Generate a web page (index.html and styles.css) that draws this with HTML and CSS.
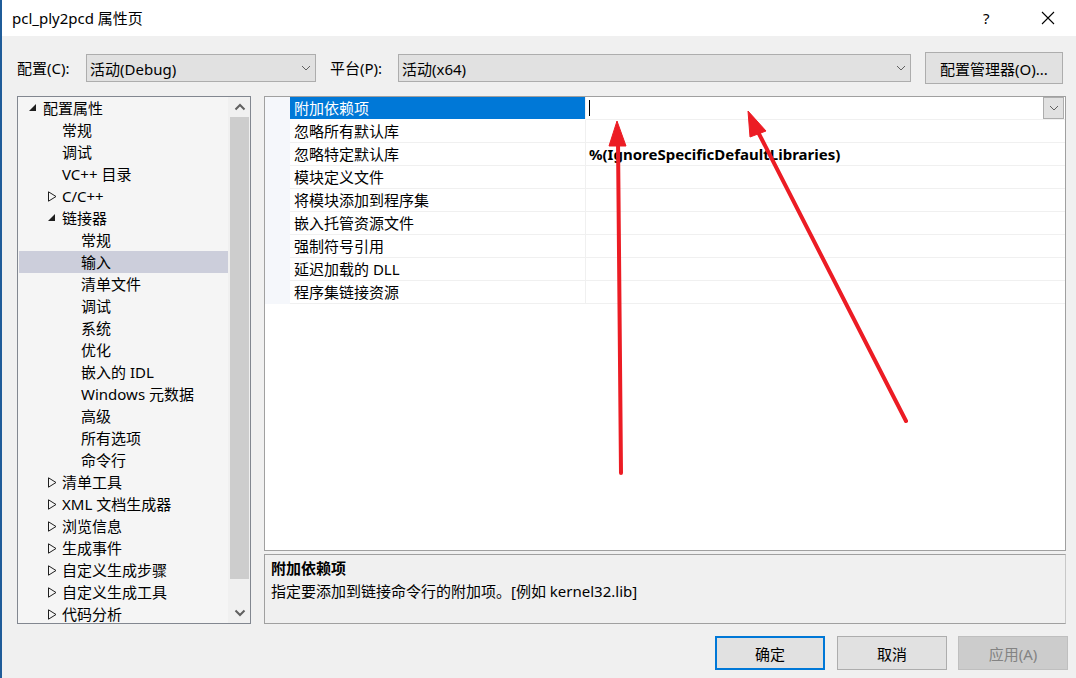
FILE: index.html
```html
<!DOCTYPE html>
<html lang="zh-CN">
<head>
<meta charset="utf-8">
<title>pcl_ply2pcd 属性页</title>
<link rel="stylesheet" href="styles.css">
</head>
<body>
<div class="window">
  <div class="titlebar">
    <div class="title">pcl_ply2pcd 属性页</div>
    <div class="title-btns">
      <span class="help">?</span>
      <svg class="close" width="14" height="14" viewBox="0 0 14 14"><path d="M1 1 L13 13 M13 1 L1 13" stroke="#000" stroke-width="1.1" fill="none"/></svg>
    </div>
  </div>

  <div class="content">
    <div class="config-row">
      <span class="lbl">配置(C):</span>
      <div class="combo combo-config"><span>活动(Debug)</span><svg class="chev" width="10" height="6" viewBox="0 0 10 6"><path d="M1 1 L5 5 L9 1" stroke="#606060" fill="none"/></svg></div>
      <span class="lbl lbl-plat">平台(P):</span>
      <div class="combo combo-plat"><span>活动(x64)</span><svg class="chev" width="10" height="6" viewBox="0 0 10 6"><path d="M1 1 L5 5 L9 1" stroke="#606060" fill="none"/></svg></div>
      <div class="btn btn-mgr">配置管理器(O)...</div>
    </div>

    <div class="main">
      <div class="tree">
        <div class="tree-list">
          <div class="row l0"><span class="tg"><svg width="8" height="8" viewBox="0 0 8 8"><path d="M7 0 L7 7 L0 7 Z" fill="#1e1e1e"/></svg></span>配置属性</div>
          <div class="row l1"><span class="tg"></span>常规</div>
          <div class="row l1"><span class="tg"></span>调试</div>
          <div class="row l1"><span class="tg"></span>VC++ 目录</div>
          <div class="row l1"><span class="tg"><svg width="9" height="11" viewBox="0 0 9 11"><path d="M0.5 0.8 L8 5.5 L0.5 10.2 Z" fill="none" stroke="#1e1e1e"/></svg></span>C/C++</div>
          <div class="row l1"><span class="tg"><svg width="8" height="8" viewBox="0 0 8 8"><path d="M7 0 L7 7 L0 7 Z" fill="#1e1e1e"/></svg></span>链接器</div>
          <div class="row l2"><span class="tg"></span>常规</div>
          <div class="row l2 sel"><span class="tg"></span>输入</div>
          <div class="row l2"><span class="tg"></span>清单文件</div>
          <div class="row l2"><span class="tg"></span>调试</div>
          <div class="row l2"><span class="tg"></span>系统</div>
          <div class="row l2"><span class="tg"></span>优化</div>
          <div class="row l2"><span class="tg"></span>嵌入的 IDL</div>
          <div class="row l2"><span class="tg"></span>Windows 元数据</div>
          <div class="row l2"><span class="tg"></span>高级</div>
          <div class="row l2"><span class="tg"></span>所有选项</div>
          <div class="row l2"><span class="tg"></span>命令行</div>
          <div class="row l1"><span class="tg"><svg width="9" height="11" viewBox="0 0 9 11"><path d="M0.5 0.8 L8 5.5 L0.5 10.2 Z" fill="none" stroke="#1e1e1e"/></svg></span>清单工具</div>
          <div class="row l1"><span class="tg"><svg width="9" height="11" viewBox="0 0 9 11"><path d="M0.5 0.8 L8 5.5 L0.5 10.2 Z" fill="none" stroke="#1e1e1e"/></svg></span>XML 文档生成器</div>
          <div class="row l1"><span class="tg"><svg width="9" height="11" viewBox="0 0 9 11"><path d="M0.5 0.8 L8 5.5 L0.5 10.2 Z" fill="none" stroke="#1e1e1e"/></svg></span>浏览信息</div>
          <div class="row l1"><span class="tg"><svg width="9" height="11" viewBox="0 0 9 11"><path d="M0.5 0.8 L8 5.5 L0.5 10.2 Z" fill="none" stroke="#1e1e1e"/></svg></span>生成事件</div>
          <div class="row l1"><span class="tg"><svg width="9" height="11" viewBox="0 0 9 11"><path d="M0.5 0.8 L8 5.5 L0.5 10.2 Z" fill="none" stroke="#1e1e1e"/></svg></span>自定义生成步骤</div>
          <div class="row l1"><span class="tg"><svg width="9" height="11" viewBox="0 0 9 11"><path d="M0.5 0.8 L8 5.5 L0.5 10.2 Z" fill="none" stroke="#1e1e1e"/></svg></span>自定义生成工具</div>
          <div class="row l1"><span class="tg"><svg width="9" height="11" viewBox="0 0 9 11"><path d="M0.5 0.8 L8 5.5 L0.5 10.2 Z" fill="none" stroke="#1e1e1e"/></svg></span>代码分析</div>
        </div>
        <div class="vscroll">
          <div class="sb-arrow"><svg width="12" height="8" viewBox="0 0 12 8"><path d="M1.5 6.5 L6 2 L10.5 6.5" stroke="#606060" stroke-width="2" fill="none"/></svg></div>
          <div class="sb-track"><div class="sb-thumb"></div></div>
          <div class="sb-arrow"><svg width="12" height="8" viewBox="0 0 12 8"><path d="M1.5 1.5 L6 6 L10.5 1.5" stroke="#606060" stroke-width="2" fill="none"/></svg></div>
        </div>
      </div>

      <div class="right">
        <div class="grid">
          <div class="grow">
            <div class="gut"></div><div class="gname gsel">附加依赖项</div><div class="gval"><span class="caret"></span><div class="gdrop"><svg width="10" height="6" viewBox="0 0 10 6"><path d="M1 1 L5 5 L9 1" stroke="#606060" fill="none"/></svg></div></div>
          </div>
          <div class="grow"><div class="gut"></div><div class="gname">忽略所有默认库</div><div class="gval"></div></div>
          <div class="grow"><div class="gut"></div><div class="gname">忽略特定默认库</div><div class="gval bold">%(IgnoreSpecificDefaultLibraries)</div></div>
          <div class="grow"><div class="gut"></div><div class="gname">模块定义文件</div><div class="gval"></div></div>
          <div class="grow"><div class="gut"></div><div class="gname">将模块添加到程序集</div><div class="gval"></div></div>
          <div class="grow"><div class="gut"></div><div class="gname">嵌入托管资源文件</div><div class="gval"></div></div>
          <div class="grow"><div class="gut"></div><div class="gname">强制符号引用</div><div class="gval"></div></div>
          <div class="grow"><div class="gut"></div><div class="gname">延迟加载的 DLL</div><div class="gval"></div></div>
          <div class="grow"><div class="gut"></div><div class="gname">程序集链接资源</div><div class="gval"></div></div>
        </div>
        <div class="desc">
          <div class="desc-title">附加依赖项</div>
          <div class="desc-text">指定要添加到链接命令行的附加项。[例如 kernel32.lib]</div>
        </div>
      </div>
    </div>

    <div class="footer">
      <div class="btn fbtn default">确定</div>
      <div class="btn fbtn">取消</div>
      <div class="btn fbtn disabled">应用(A)</div>
    </div>
  </div>

  <svg class="annot" width="1076" height="678" viewBox="0 0 1076 678">
    <g fill="#ec1c24" stroke="#ec1c24">
      <path d="M621 473 L618 140" stroke-width="4" fill="none" stroke-linecap="round"/>
      <path d="M617 121 L626 146 L609 146 Z" stroke-width="1"/>
      <path d="M906 421 L756 128" stroke-width="4" fill="none" stroke-linecap="round"/>
      <path d="M748 111 L766 131 L750 137 Z" stroke-width="1"/>
    </g>
  </svg>
</div>
</body>
</html>
```

FILE: styles.css
```css
* { box-sizing: border-box; }
html, body { margin: 0; padding: 0; }
body {
  width: 1076px;
  height: 678px;
  overflow: hidden;
  font-family: "Noto Sans", "Noto Sans CJK SC", sans-serif;
  font-size: 15px;
  color: #000;
  background: #f0f0f0;
}
.window {
  position: relative;
  width: 1076px;
  height: 678px;
  border-left: 2px solid #1f5c99;
  background: #f0f0f0;
  display: flex;
  flex-direction: column;
}
.titlebar {
  height: 36px;
  background: #fff;
  display: flex;
  align-items: center;
  justify-content: space-between;
  padding-left: 10px;
}
.title { font-size: 15px; line-height: 20px; }
.title-btns { display: flex; align-items: center; }
.help { font-size: 15px; width: 14px; margin-right: 44px; }
.close { margin-right: 21px; }

.content {
  flex: 1;
  display: flex;
  flex-direction: column;
  padding: 16px 0 0 15px;
}
.config-row {
  height: 32px;
  display: flex;
  align-items: center;
}
.lbl { width: 69px; line-height: 20px; }
.lbl-plat { width: 68px; margin-left: 14px; }
.combo {
  height: 28px;
  background: #e1e1e1;
  border: 1px solid #adadad;
  display: flex;
  align-items: center;
  justify-content: space-between;
  padding: 0 4px 0 3px;
}
.combo-config { width: 230px; }
.combo-plat { width: 513px; }
.btn {
  background: #e1e1e1;
  border: 1px solid #adadad;
  display: flex;
  align-items: center;
  justify-content: center;
}
.btn-mgr { width: 138px; height: 32px; margin-left: 14px; }

.main {
  margin-top: 12px;
  display: flex;
  height: 528px;
}
.tree {
  width: 234px;
  height: 528px;
  border: 1px solid #828790;
  background: #f5f5f5;
  display: flex;
}
.tree-list {
  flex: 1;
  overflow: hidden;
}
.row {
  height: 22px;
  line-height: 22px;
  display: flex;
  align-items: center;
  white-space: nowrap;
}
.row.sel { background: #cccedb; margin-left: 1px; }
.row.sel.l2 { padding-left: 48px; }
.l0 { padding-left: 11px; }
.l1 { padding-left: 30px; }
.l2 { padding-left: 49px; }
.tg {
  width: 14px;
  height: 22px;
  display: flex;
  align-items: center;
}
.vscroll {
  width: 22px;
  display: flex;
  flex-direction: column;
  background: #f0f0f0;
  border-left: 1px solid #f0f0f0;
}
.sb-arrow {
  height: 20px;
  display: flex;
  align-items: center;
  justify-content: center;
}
.sb-track { flex: 1; padding: 0 1px; }
.sb-thumb { height: 462px; background: #cdcdcd; }

.right {
  margin-left: 13px;
  width: 802px;
  display: flex;
  flex-direction: column;
}
.grid {
  height: 456px;
  border: 1px solid #a0a0a0;
  background: #fff;
}
.grow {
  height: 23px;
  display: flex;
}
.gut { width: 25px; background: #f5f7fb; }
.gname {
  width: 296px;
  padding-left: 4px;
  line-height: 22px;
  border-bottom: 1px solid #f0f0f0;
  border-right: 1px solid #f0f0f0;
  white-space: nowrap;
}
.gname.gsel { background: #0078d7; color: #fff; border-bottom-color: #fff; }
.gval {
  flex: 1;
  padding-left: 3px;
  line-height: 22px;
  border-bottom: 1px solid #f0f0f0;
  display: flex;
  align-items: center;
  white-space: nowrap;
}
.gval.bold { font-weight: bold; }
.caret { width: 1px; height: 16px; background: #000; }
.gdrop {
  margin-left: auto;
  margin-right: 1px;
  width: 21px;
  height: 22px;
  background: #e1e1e1;
  border: 1px solid #adadad;
  display: flex;
  align-items: center;
  justify-content: center;
}
.desc {
  margin-top: 3px;
  height: 70px;
  border: 1px solid #a0a0a0;
  border-right-color: #c8c8c8;
  background: #f0f0f0;
  padding: 2px 6px;
}
.desc-title { font-weight: bold; line-height: 22px; }
.desc-text { line-height: 24px; }

.footer {
  margin-top: 12px;
  display: flex;
  justify-content: flex-end;
  padding-right: 8px;
}
.fbtn { width: 110px; height: 34px; margin-left: 12px; }
.fbtn.default { border: 2px solid #0078d7; }
.fbtn.disabled { background: #cccccc; border-color: #bfbfbf; color: #838383; margin-left: 11px; }

.annot {
  position: absolute;
  left: -2px;
  top: 0;
  pointer-events: none;
}
```
